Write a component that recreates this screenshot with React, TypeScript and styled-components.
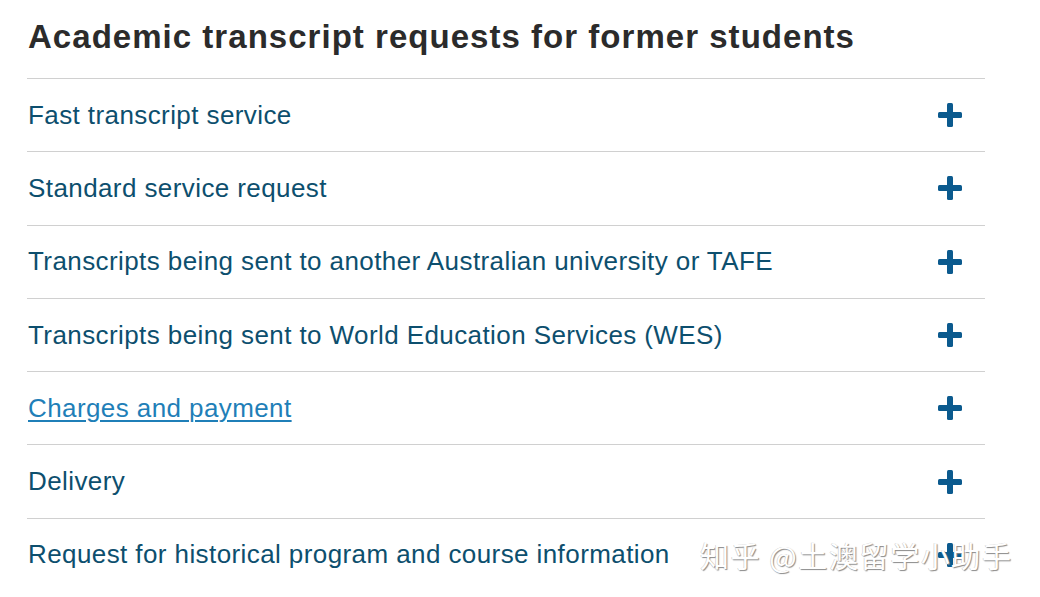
import React from "react";
import styled, { createGlobalStyle } from "styled-components";

const Global = createGlobalStyle`
  html, body { margin: 0; padding: 0; background: #ffffff; }
  body { font-family: "Liberation Sans", Arial, sans-serif; }
`;

const Page = styled.div`
  position: relative;
  width: 1040px;
  height: 597px;
  overflow: hidden;
  padding: 0 0 0 27px;
  box-sizing: border-box;
`;

const Title = styled.h1`
  margin: 0;
  padding: 18px 0 0 1px;
  height: 78px;
  box-sizing: border-box;
  font-size: 33px;
  font-weight: 700;
  letter-spacing: 1.03px;
  color: #2b2b2b;
  line-height: 38px;
`;

const List = styled.div`
  width: 958px;
  display: flex;
  flex-direction: column;
`;

const Row = styled.div`
  display: flex;
  align-items: center;
  justify-content: space-between;
  height: 73.3px;
  border-top: 1px solid #d0d0d0;
  box-sizing: border-box;
  padding: 0 23px 0 1px;
`;

const Label = styled.span<{ $link?: boolean }>`
  font-size: 26px;
  letter-spacing: 0.41px;
  color: ${(p) => (p.$link ? "#1f7fb8" : "#0d4f6e")};
  text-decoration: ${(p) => (p.$link ? "underline" : "none")};
  text-underline-offset: 3px;
  text-decoration-thickness: 2px;
`;

const Watermark = styled.div`
  position: absolute;
  left: 700px;
  top: 534px;
  font-family: "Noto Sans CJK SC", sans-serif;
  font-size: 29px;
  color: #ffffff;
  letter-spacing: 1.6px;
  text-shadow: 1px 1px 1px #8a8a8a, -0.5px -0.5px 0 #c8c8c8;
  white-space: nowrap;
`;

const Plus = () => (
  <svg width="24" height="24" viewBox="0 0 24 24">
    <rect x="9" y="0" width="6" height="24" rx="1.5" fill="#0b5a8e" />
    <rect x="0" y="9" width="24" height="6" rx="1.5" fill="#0b5a8e" />
  </svg>
);

const items = [
  { t: "Fast transcript service" },
  { t: "Standard service request" },
  { t: "Transcripts being sent to another Australian university or TAFE" },
  { t: "Transcripts being sent to World Education Services (WES)" },
  { t: "Charges and payment", link: true },
  { t: "Delivery" },
  { t: "Request for historical program and course information" },
];

export default function App() {
  return (
    <>
      <Global />
      <Page>
        <Title>Academic transcript requests for former students</Title>
        <List>
          {items.map((it) => (
            <Row key={it.t}>
              <Label $link={it.link}>{it.t}</Label>
              <Plus />
            </Row>
          ))}
        </List>
        <Watermark>知乎 @土澳留学小助手</Watermark>
      </Page>
    </>
  );
}
